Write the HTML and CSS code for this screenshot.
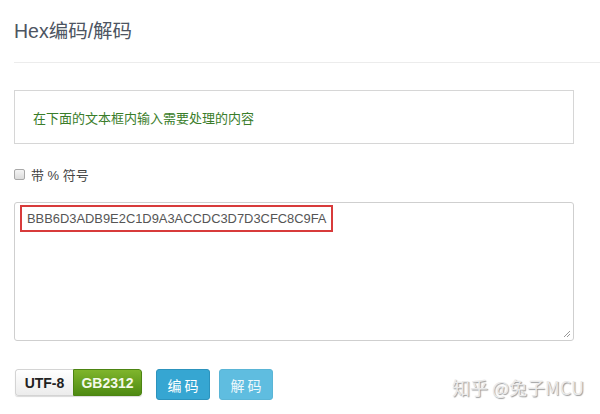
FILE: index.html
```html
<!DOCTYPE html>
<html lang="zh">
<head>
<meta charset="utf-8">
<link rel="stylesheet" href="styles.css">
</head>
<body>
<div class="page">
  <h1 class="title">Hex编码/解码</h1>
  <div class="divider"></div>
  <div class="main">
    <div class="info">在下面的文本框内输入需要处理的内容</div>
    <label class="check"><span class="box"></span><span>带 % 符号</span></label>
    <div class="area">
      <span class="hex">BBB6D3ADB9E2C1D9A3ACCDC3D7D3CFC8C9FA</span>
      <svg class="grip" width="8" height="8" viewBox="0 0 8 8"><path d="M7 1L1 7M7 4L4 7" stroke="#999" stroke-width="1"/></svg>
    </div>
    <div class="actions">
      <div class="toggle"><span class="opt">UTF-8</span><span class="opt on">GB2312</span></div>
      <button class="btn">编 码</button>
      <button class="btn light">解 码</button>
      <div class="mark">知乎 @兔子MCU</div>
    </div>
  </div>
</div>
</body>
</html>
```
FILE: styles.css
```css
* { box-sizing: border-box; }
body { margin: 0; background: #fff; font-family: "Liberation Sans", Arial, "Noto Sans CJK SC", sans-serif; color: #555; }
.page { padding-top: 19px; }
.title { margin: 0 0 0 14px; font-weight: normal; font-size: 19.5px; line-height: 24px; color: #4d5562; font-family: "Liberation Sans", "Noto Sans CJK SC", sans-serif; }
.divider { margin: 19px 0 0 14px; height: 1px; background: #ececec; }
.main { width: 560px; margin-left: 14px; }
.info { margin-top: 27px; height: 54px; border: 1px solid #d6d6d6; padding-left: 18px; display: flex; align-items: center; font-size: 13px; color: #3a7d2a; padding-top: 1px; }
.check { margin-top: 23px; display: flex; align-items: center; gap: 6px; font-size: 13px; color: #444; height: 14px; }
.box { width: 11px; height: 11px; border: 1px solid #a8a8a8; border-radius: 2px; background: linear-gradient(#f4f4f4, #dcdcdc); }
.area { position: relative; margin-top: 21px; height: 139px; border: 1px solid #cfcfcf; border-radius: 3px; padding: 2px 5px; }
.hex { display: inline-block; border: 2px solid #d83b3b; padding: 4px 5px 3px 5px; font-size: 12.9px; line-height: 16px; color: #555; }
.grip { position: absolute; right: 2px; bottom: 2px; }
.actions { position: relative; margin-top: 28px; display: flex; align-items: flex-start; }
.toggle { display: flex; height: 27px; border-radius: 3px; overflow: hidden; margin-left: 1px; box-shadow: 0 1px 1px rgba(0,0,0,0.15); }
.opt { display: flex; align-items: center; justify-content: center; font-weight: bold; font-size: 14px; color: #222; background: linear-gradient(#fff, #ececec); width: 58px; border: 1px solid #d4d4d4; border-right: none; border-radius: 3px 0 0 3px; }
.opt.on { width: 69px; color: #f4f9ea; background: linear-gradient(#7fb52c, #4e8a12); border: 1px solid #4c8412; border-radius: 0 3px 3px 0; }
.btn { margin-left: 14px; width: 54px; height: 31px; border: 1px solid #2c93bd; border-radius: 3px; background: #36a6d2; color: #fff; font-size: 14px; font-family: "Noto Sans CJK SC", sans-serif; padding: 0; }
.btn.light { margin-left: 9px; background: #5fbde0; border-color: #5ab5d6; color: #eef8fc; }
.mark { position: absolute; left: 438px; top: 5px; font-size: 18px; color: #eaeaea; text-shadow: 1px 1px 1px #9a9a9a; font-family: "Noto Sans CJK SC", sans-serif; white-space: nowrap; }
```
